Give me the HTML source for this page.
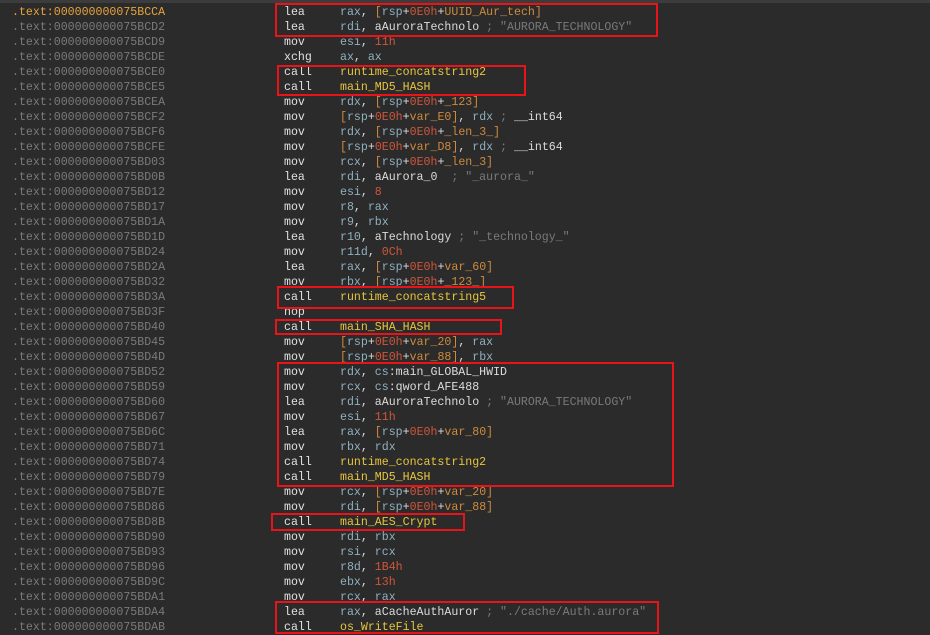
<!DOCTYPE html><html><head><style>
body{margin:0;width:930px;height:635px;background:#2b2b2b;overflow:hidden;position:relative;font-family:"Liberation Mono",monospace;font-size:11.6px}
.top{position:absolute;left:0;top:0;width:930px;height:3px;background:#3c3c3c}
.row{position:absolute;left:0;height:15px;line-height:15px;white-space:pre;color:#dcdcdc;margin-top:1px}
.a{position:absolute;left:12px;color:#7a7a7a}
.m{position:absolute;left:284px;color:#e0e0e0}
.o{position:absolute;left:340px;color:#dcdcdc}
.r{color:#8fb0bf}.v{color:#d08a3c}.n{color:#d0553a}.y{color:#e8c43c}.c{color:#7a7a7a}.w{color:#e0e0e0}
.box{position:absolute;border:2px solid #e8141a;box-sizing:border-box}
</style></head><body><div class="top"></div>
<div class="row" style="top:4px"><span class="a" style="color:#e8a33a">.text:000000000075BCCA</span><span class="m">lea</span><span class="o"><span class="r">rax</span>, <span class="v">[</span><span class="r">rsp</span>+<span class="n">0E0h</span>+<span class="v">UUID_Aur_tech]</span></span></div>
<div class="row" style="top:19px"><span class="a">.text:000000000075BCD2</span><span class="m">lea</span><span class="o"><span class="r">rdi</span>, aAuroraTechnolo <span class="c">; "AURORA_TECHNOLOGY"</span></span></div>
<div class="row" style="top:34px"><span class="a">.text:000000000075BCD9</span><span class="m">mov</span><span class="o"><span class="r">esi</span>, <span class="n">11h</span></span></div>
<div class="row" style="top:49px"><span class="a">.text:000000000075BCDE</span><span class="m">xchg</span><span class="o"><span class="r">ax</span>, <span class="r">ax</span></span></div>
<div class="row" style="top:64px"><span class="a">.text:000000000075BCE0</span><span class="m">call</span><span class="o y">runtime_concatstring2</span></div>
<div class="row" style="top:79px"><span class="a">.text:000000000075BCE5</span><span class="m">call</span><span class="o y">main_MD5_HASH</span></div>
<div class="row" style="top:94px"><span class="a">.text:000000000075BCEA</span><span class="m">mov</span><span class="o"><span class="r">rdx</span>, <span class="v">[</span><span class="r">rsp</span>+<span class="n">0E0h</span>+<span class="v">_123]</span></span></div>
<div class="row" style="top:109px"><span class="a">.text:000000000075BCF2</span><span class="m">mov</span><span class="o"><span class="v">[</span><span class="r">rsp</span>+<span class="n">0E0h</span>+<span class="v">var_E0]</span>, <span class="r">rdx</span> <span class="c">;</span> __int64</span></div>
<div class="row" style="top:124px"><span class="a">.text:000000000075BCF6</span><span class="m">mov</span><span class="o"><span class="r">rdx</span>, <span class="v">[</span><span class="r">rsp</span>+<span class="n">0E0h</span>+<span class="v">_len_3_]</span></span></div>
<div class="row" style="top:139px"><span class="a">.text:000000000075BCFE</span><span class="m">mov</span><span class="o"><span class="v">[</span><span class="r">rsp</span>+<span class="n">0E0h</span>+<span class="v">var_D8]</span>, <span class="r">rdx</span> <span class="c">;</span> __int64</span></div>
<div class="row" style="top:154px"><span class="a">.text:000000000075BD03</span><span class="m">mov</span><span class="o"><span class="r">rcx</span>, <span class="v">[</span><span class="r">rsp</span>+<span class="n">0E0h</span>+<span class="v">_len_3]</span></span></div>
<div class="row" style="top:169px"><span class="a">.text:000000000075BD0B</span><span class="m">lea</span><span class="o"><span class="r">rdi</span>, aAurora_0  <span class="c">; "_aurora_"</span></span></div>
<div class="row" style="top:184px"><span class="a">.text:000000000075BD12</span><span class="m">mov</span><span class="o"><span class="r">esi</span>, <span class="n">8</span></span></div>
<div class="row" style="top:199px"><span class="a">.text:000000000075BD17</span><span class="m">mov</span><span class="o"><span class="r">r8</span>, <span class="r">rax</span></span></div>
<div class="row" style="top:214px"><span class="a">.text:000000000075BD1A</span><span class="m">mov</span><span class="o"><span class="r">r9</span>, <span class="r">rbx</span></span></div>
<div class="row" style="top:229px"><span class="a">.text:000000000075BD1D</span><span class="m">lea</span><span class="o"><span class="r">r10</span>, aTechnology <span class="c">; "_technology_"</span></span></div>
<div class="row" style="top:244px"><span class="a">.text:000000000075BD24</span><span class="m">mov</span><span class="o"><span class="r">r11d</span>, <span class="n">0Ch</span></span></div>
<div class="row" style="top:259px"><span class="a">.text:000000000075BD2A</span><span class="m">lea</span><span class="o"><span class="r">rax</span>, <span class="v">[</span><span class="r">rsp</span>+<span class="n">0E0h</span>+<span class="v">var_60]</span></span></div>
<div class="row" style="top:274px"><span class="a">.text:000000000075BD32</span><span class="m">mov</span><span class="o"><span class="r">rbx</span>, <span class="v">[</span><span class="r">rsp</span>+<span class="n">0E0h</span>+<span class="v">_123_]</span></span></div>
<div class="row" style="top:289px"><span class="a">.text:000000000075BD3A</span><span class="m">call</span><span class="o y">runtime_concatstring5</span></div>
<div class="row" style="top:304px"><span class="a">.text:000000000075BD3F</span><span class="m">nop</span></div>
<div class="row" style="top:319px"><span class="a">.text:000000000075BD40</span><span class="m">call</span><span class="o y">main_SHA_HASH</span></div>
<div class="row" style="top:334px"><span class="a">.text:000000000075BD45</span><span class="m">mov</span><span class="o"><span class="v">[</span><span class="r">rsp</span>+<span class="n">0E0h</span>+<span class="v">var_20]</span>, <span class="r">rax</span></span></div>
<div class="row" style="top:349px"><span class="a">.text:000000000075BD4D</span><span class="m">mov</span><span class="o"><span class="v">[</span><span class="r">rsp</span>+<span class="n">0E0h</span>+<span class="v">var_88]</span>, <span class="r">rbx</span></span></div>
<div class="row" style="top:364px"><span class="a">.text:000000000075BD52</span><span class="m">mov</span><span class="o"><span class="r">rdx</span>, <span class="r">cs</span>:main_GLOBAL_HWID</span></div>
<div class="row" style="top:379px"><span class="a">.text:000000000075BD59</span><span class="m">mov</span><span class="o"><span class="r">rcx</span>, <span class="r">cs</span>:qword_AFE488</span></div>
<div class="row" style="top:394px"><span class="a">.text:000000000075BD60</span><span class="m">lea</span><span class="o"><span class="r">rdi</span>, aAuroraTechnolo <span class="c">; "AURORA_TECHNOLOGY"</span></span></div>
<div class="row" style="top:409px"><span class="a">.text:000000000075BD67</span><span class="m">mov</span><span class="o"><span class="r">esi</span>, <span class="n">11h</span></span></div>
<div class="row" style="top:424px"><span class="a">.text:000000000075BD6C</span><span class="m">lea</span><span class="o"><span class="r">rax</span>, <span class="v">[</span><span class="r">rsp</span>+<span class="n">0E0h</span>+<span class="v">var_80]</span></span></div>
<div class="row" style="top:439px"><span class="a">.text:000000000075BD71</span><span class="m">mov</span><span class="o"><span class="r">rbx</span>, <span class="r">rdx</span></span></div>
<div class="row" style="top:454px"><span class="a">.text:000000000075BD74</span><span class="m">call</span><span class="o y">runtime_concatstring2</span></div>
<div class="row" style="top:469px"><span class="a">.text:000000000075BD79</span><span class="m">call</span><span class="o y">main_MD5_HASH</span></div>
<div class="row" style="top:484px"><span class="a">.text:000000000075BD7E</span><span class="m">mov</span><span class="o"><span class="r">rcx</span>, <span class="v">[</span><span class="r">rsp</span>+<span class="n">0E0h</span>+<span class="v">var_20]</span></span></div>
<div class="row" style="top:499px"><span class="a">.text:000000000075BD86</span><span class="m">mov</span><span class="o"><span class="r">rdi</span>, <span class="v">[</span><span class="r">rsp</span>+<span class="n">0E0h</span>+<span class="v">var_88]</span></span></div>
<div class="row" style="top:514px"><span class="a">.text:000000000075BD8B</span><span class="m">call</span><span class="o y">main_AES_Crypt</span></div>
<div class="row" style="top:529px"><span class="a">.text:000000000075BD90</span><span class="m">mov</span><span class="o"><span class="r">rdi</span>, <span class="r">rbx</span></span></div>
<div class="row" style="top:544px"><span class="a">.text:000000000075BD93</span><span class="m">mov</span><span class="o"><span class="r">rsi</span>, <span class="r">rcx</span></span></div>
<div class="row" style="top:559px"><span class="a">.text:000000000075BD96</span><span class="m">mov</span><span class="o"><span class="r">r8d</span>, <span class="n">1B4h</span></span></div>
<div class="row" style="top:574px"><span class="a">.text:000000000075BD9C</span><span class="m">mov</span><span class="o"><span class="r">ebx</span>, <span class="n">13h</span></span></div>
<div class="row" style="top:589px"><span class="a">.text:000000000075BDA1</span><span class="m">mov</span><span class="o"><span class="r">rcx</span>, <span class="r">rax</span></span></div>
<div class="row" style="top:604px"><span class="a">.text:000000000075BDA4</span><span class="m">lea</span><span class="o"><span class="r">rax</span>, aCacheAuthAuror <span class="c">; "./cache/Auth.aurora"</span></span></div>
<div class="row" style="top:619px"><span class="a">.text:000000000075BDAB</span><span class="m">call</span><span class="o y">os_WriteFile</span></div>
<div class="box" style="left:275px;top:3px;width:383px;height:34px"></div>
<div class="box" style="left:277px;top:65px;width:249px;height:31px"></div>
<div class="box" style="left:277px;top:286px;width:237px;height:23px"></div>
<div class="box" style="left:275px;top:319px;width:227px;height:16px"></div>
<div class="box" style="left:277px;top:362px;width:397px;height:125px"></div>
<div class="box" style="left:271px;top:513px;width:194px;height:18px"></div>
<div class="box" style="left:275px;top:601px;width:384px;height:33px"></div>
</body></html>
